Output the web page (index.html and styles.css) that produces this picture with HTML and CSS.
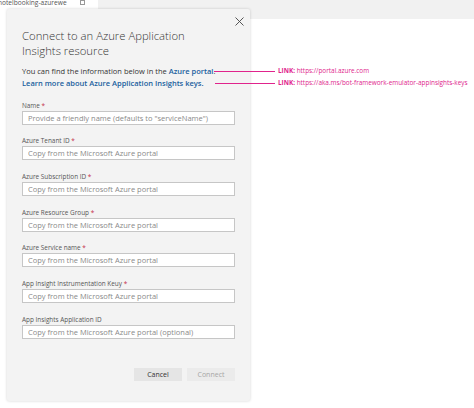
FILE: index.html
```html
<!DOCTYPE html>
<html lang="en">
<head>
  <meta charset="UTF-8">
  <title>Connect to an Azure Application Insights resource</title>
  <link rel="stylesheet" href="styles.css">
</head>
<body>

  <!-- Background tab strip -->
  <div class="tabbar">
    <div class="tab">
      <span class="tab-name">hotelbooking-azurewe</span>
      <span class="tab-icon"></span>
    </div>
    <div class="tab-fill"></div>
  </div>

  <!-- Dialog -->
  <div class="dialog">
    <button class="close" aria-label="Close">
      <svg width="9" height="9" viewBox="0 0 9 9">
        <path d="M0.5 0.5 L8.5 8.5 M8.5 0.5 L0.5 8.5" stroke="#444" stroke-width="0.9" fill="none"/>
      </svg>
    </button>
    <h1 class="title">Connect to an Azure Application Insights resource</h1>

    <p class="intro">
      You can find the information below in the <a href="#" class="link">Azure portal</a>.<br>
      <a href="#" class="link">Learn more about Azure Application Insights keys.</a>
    </p>

    <div class="field">
      <label for="name">Name <span class="req">*</span></label>
      <input type="text" id="name" placeholder="Provide a friendly name (defaults to &quot;serviceName&quot;)">
    </div>
    <div class="field">
      <label for="tenant">Azure Tenant ID <span class="req">*</span></label>
      <input type="text" id="tenant" placeholder="Copy from the Microsoft Azure portal">
    </div>
    <div class="field">
      <label for="subscription">Azure Subscription ID <span class="req">*</span></label>
      <input type="text" id="subscription" placeholder="Copy from the Microsoft Azure portal">
    </div>
    <div class="field">
      <label for="group">Azure Resource Group <span class="req">*</span></label>
      <input type="text" id="group" placeholder="Copy from the Microsoft Azure portal">
    </div>
    <div class="field">
      <label for="service">Azure Service name <span class="req">*</span></label>
      <input type="text" id="service" placeholder="Copy from the Microsoft Azure portal">
    </div>
    <div class="field">
      <label for="ikey">App Insight Instrumentation Keuy <span class="req">*</span></label>
      <input type="text" id="ikey" placeholder="Copy from the Microsoft Azure portal">
    </div>
    <div class="field">
      <label for="appid">App Insights Application ID</label>
      <input type="text" id="appid" placeholder="Copy from the Microsoft Azure portal (optional)">
    </div>

    <div class="actions">
      <button class="btn">Cancel</button>
      <button class="btn btn-disabled" disabled>Connect</button>
    </div>
  </div>

  <!-- Redline annotations -->
  <div class="note note-portal">
    <span class="note-line"></span>
    <span class="note-text"><b>LINK:</b> https://portal.azure.com</span>
  </div>
  <div class="note note-keys">
    <span class="note-line"></span>
    <span class="note-text"><b>LINK:</b> https://aka.ms/bot-framework-emulator-appinsights-keys</span>
  </div>

</body>
</html>
```

FILE: styles.css
```css
body {
  margin: 0;
  width: 474px;
  height: 408px;
  background: #fff;
  font-family: 'Open Sans', 'Noto Sans', sans-serif;
  color: #333;
  position: relative;
  overflow: hidden;
}

.tabbar {
  display: flex;
  height: 19px;
}
.tab {
  width: 98px;
  display: flex;
  align-items: flex-start;
  gap: 13px;
  margin-top: -2px;
  font-size: 6.6px;
  line-height: 9px;
  color: #555;
  white-space: nowrap;
  overflow: hidden;
}
.tab-name {
  margin-left: -2px;
}
.tab-icon {
  width: 5px;
  height: 5px;
  margin-top: 2px;
  border: 1px solid #999;
  box-sizing: border-box;
}
.tab-fill {
  flex: 1;
  background: #f1f1f1;
}

.dialog {
  position: absolute;
  left: 7px;
  top: 9px;
  width: 243px;
  height: 392px;
  box-sizing: border-box;
  padding: 0 15px;
  background: #f3f3f3;
  box-shadow: 0 0 3px rgba(0,0,0,0.18);
  border-radius: 2px;
}
.close {
  position: absolute;
  right: 6px;
  top: 8px;
  width: 9px;
  height: 9px;
  padding: 0;
  border: none;
  background: none;
  display: flex;
}
.title {
  margin: 18.5px 20px 0 0;
  font-size: 11.3px;
  font-weight: 300;
  line-height: 15px;
  color: #333;
}
.intro {
  margin: 7.25px 0 0;
  font-size: 7.5px;
  line-height: 12.5px;
  color: #333;
}
.link {
  color: #1a5f9e;
  font-weight: 600;
  text-decoration: none;
}

.field {
  margin-top: 10.7px;
}
.field:first-of-type {
  margin-top: 9.75px;
}
.field label {
  display: block;
  font-size: 6.4px;
  line-height: 11px;
  color: #555;
}
.req {
  color: #c4314b;
}
.field input {
  display: block;
  width: 100%;
  height: 14px;
  box-sizing: border-box;
  margin: 0;
  padding: 0 5px;
  border: 1px solid #c6c6c6;
  background: #fff;
  font-family: inherit;
  font-size: 7.5px;
}
.field input::placeholder {
  color: #8a8a8a;
}

.actions {
  display: flex;
  justify-content: flex-end;
  gap: 5px;
  margin-top: 29.3px;
}
.btn {
  width: 48px;
  height: 13px;
  padding: 0;
  border: none;
  background: #e5e5e5;
  font-family: inherit;
  font-size: 7px;
  color: #333;
}
.btn-disabled {
  background: #ebebeb;
  color: #a6a6a6;
}

.note {
  position: absolute;
  left: 214px;
  display: flex;
  align-items: center;
  gap: 3px;
  white-space: nowrap;
}
.note-portal {
  top: 67px;
}
.note-keys {
  top: 79px;
  left: 215px;
}
.note-line {
  width: 61px;
  height: 1px;
  background: #e0238c;
}
.note-keys .note-line {
  width: 60px;
}
.note-text {
  font-size: 6.4px;
  line-height: 8px;
  color: #e0238c;
}
.note-text b {
  font-weight: 700;
}
```
